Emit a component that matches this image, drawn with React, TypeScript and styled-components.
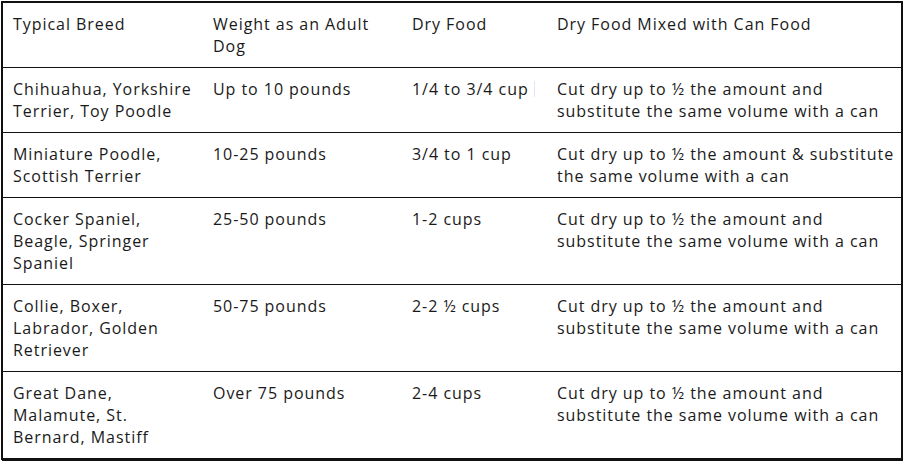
import React from 'react'
import styled, { createGlobalStyle } from 'styled-components'

const GlobalStyle = createGlobalStyle`
  html, body {
    margin: 0;
    padding: 0;
    background: #fff;
  }
  body {
    font-family: 'Open Sans', 'Liberation Sans', sans-serif;
    color: #1a1a1a;
  }
`

const Page = styled.div`
  padding: 1px;
  width: 903px;
  box-sizing: border-box;
`

const Table = styled.table`
  width: 900px;
  border-collapse: collapse;
  table-layout: fixed;
  border: 2px solid #111;
  box-shadow: 1px 1px 0 #111;
  font-size: 16px;
  line-height: 22px;
  letter-spacing: 0.95px;
`

const Row = styled.tr`
  border-bottom: 1px solid #111;
  &:last-child {
    border-bottom: none;
  }
`

const Cell = styled.td<{ $width: number }>`
  box-sizing: border-box;
  width: ${({ $width }) => $width}px;
  padding: 10px 2px 10px 10px;
  vertical-align: top;
  text-align: left;
  font-weight: 400;
  white-space: nowrap;
`

// faint caret-like line that sits after the first dry food value
const Caret = styled.span`
  display: inline-block;
  width: 1px;
  height: 16px;
  margin-left: 5px;
  vertical-align: -2px;
  background: #dbe7f3;
`

const widths = [201, 199, 145, 355]

type Line = React.ReactNode
const rows: Line[][][] = [
  [['Typical Breed'], ['Weight as an Adult', 'Dog'], ['Dry Food'], ['Dry Food Mixed with Can Food']],
  [
    ['Chihuahua, Yorkshire', 'Terrier, Toy Poodle'],
    ['Up to 10 pounds'],
    [<>1/4 to 3/4 cup<Caret /></>],
    ['Cut dry up to ½ the amount and', 'substitute the same volume with a can'],
  ],
  [
    ['Miniature Poodle,', 'Scottish Terrier'],
    ['10-25 pounds'],
    ['3/4 to 1 cup'],
    ['Cut dry up to ½ the amount & substitute', 'the same volume with a can'],
  ],
  [
    ['Cocker Spaniel,', 'Beagle, Springer', 'Spaniel'],
    ['25-50 pounds'],
    ['1-2 cups'],
    ['Cut dry up to ½ the amount and', 'substitute the same volume with a can'],
  ],
  [
    ['Collie, Boxer,', 'Labrador, Golden', 'Retriever'],
    ['50-75 pounds'],
    ['2-2 ½ cups'],
    ['Cut dry up to ½ the amount and', 'substitute the same volume with a can'],
  ],
  [
    ['Great Dane,', 'Malamute, St.', 'Bernard, Mastiff'],
    ['Over 75 pounds'],
    ['2-4 cups'],
    ['Cut dry up to ½ the amount and', 'substitute the same volume with a can'],
  ],
]

export default function App() {
  return (
    <Page>
      <GlobalStyle />
      <Table>
        <tbody>
          {rows.map((row, r) => (
            <Row key={r}>
              {row.map((lines, c) => (
                <Cell key={c} $width={widths[c]} as={r === 0 ? 'th' : 'td'}>
                  {lines.map((line, i) => (
                    <React.Fragment key={i}>
                      {i > 0 && <br />}
                      {line}
                    </React.Fragment>
                  ))}
                </Cell>
              ))}
            </Row>
          ))}
        </tbody>
      </Table>
    </Page>
  )
}
